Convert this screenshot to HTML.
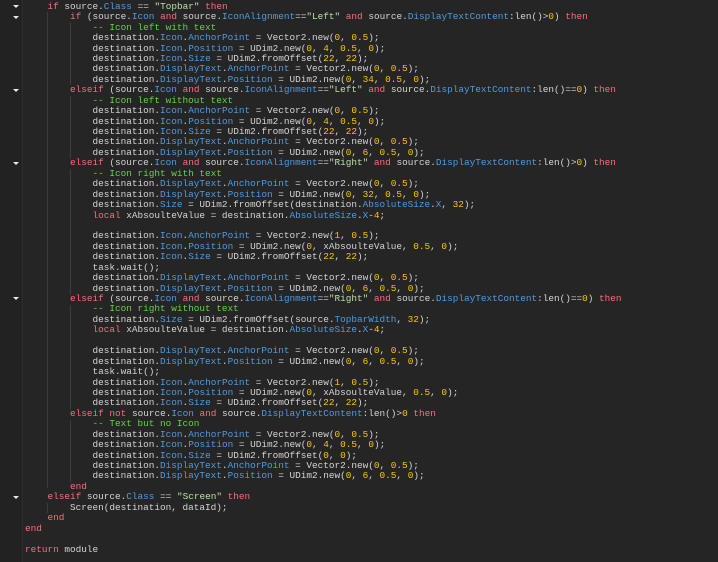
<!DOCTYPE html>
<html><head><meta charset="utf-8"><style>
html,body{margin:0;padding:0;}
body{width:718px;height:562px;background:#252525;overflow:hidden;position:relative;font-family:"Liberation Mono",monospace;}
#gut{position:absolute;left:0;top:0;width:22px;height:562px;background:#222222;border-right:1px solid #2c2c2c;}
.code{position:absolute;left:25px;top:1.8px;font-size:9.4px;line-height:10.44px;white-space:pre;color:#d4d4d4;}
.k{color:#f86d7c}.p{color:#4f9be0}.s{color:#b8e0a6}.n{color:#ffc600}.c{color:#63d34a}
.tri{position:absolute;left:13px;width:0;height:0;border-left:3px solid transparent;border-right:3px solid transparent;border-top:3px solid #e8e8e8;}
.g{position:absolute;width:1px;background:#3c3c3c;}
</style></head><body>
<div id="gut"></div>
<div class="tri" style="top:5px"></div>
<div class="tri" style="top:15.5px"></div>
<div class="tri" style="top:88.6px"></div>
<div class="tri" style="top:161.7px"></div>
<div class="tri" style="top:297.4px"></div>
<div class="tri" style="top:496px"></div>
<div class="g" style="left:47px;top:12px;height:476px"></div>
<div class="g" style="left:47px;top:503px;height:10px"></div>
<div class="g" style="left:70px;top:22px;height:63px"></div>
<div class="g" style="left:70px;top:96px;height:63px"></div>
<div class="g" style="left:70px;top:169px;height:126px"></div>
<div class="g" style="left:70px;top:305px;height:105px"></div>
<div class="g" style="left:70px;top:420px;height:63px"></div>
<div class="code">    <span class="k">if</span> source.<span class="p">Class</span> == <span class="s">"Topbar"</span> <span class="k">then</span>
        <span class="k">if</span> (source.<span class="p">Icon</span> <span class="k">and</span> source.<span class="p">IconAlignment</span>==<span class="s">"Left"</span> <span class="k">and</span> source.<span class="p">DisplayTextContent</span>:len()&gt;<span class="n">0</span>) <span class="k">then</span>
            <span class="c">-- Icon left with text</span>
            destination.<span class="p">Icon</span>.<span class="p">AnchorPoint</span> = Vector2.new(<span class="n">0</span>, <span class="n">0.5</span>);
            destination.<span class="p">Icon</span>.<span class="p">Position</span> = UDim2.new(<span class="n">0</span>, <span class="n">4</span>, <span class="n">0.5</span>, <span class="n">0</span>);
            destination.<span class="p">Icon</span>.<span class="p">Size</span> = UDim2.fromOffset(<span class="n">22</span>, <span class="n">22</span>);
            destination.<span class="p">DisplayText</span>.<span class="p">AnchorPoint</span> = Vector2.new(<span class="n">0</span>, <span class="n">0.5</span>);
            destination.<span class="p">DisplayText</span>.<span class="p">Position</span> = UDim2.new(<span class="n">0</span>, <span class="n">34</span>, <span class="n">0.5</span>, <span class="n">0</span>);
        <span class="k">elseif</span> (source.<span class="p">Icon</span> <span class="k">and</span> source.<span class="p">IconAlignment</span>==<span class="s">"Left"</span> <span class="k">and</span> source.<span class="p">DisplayTextContent</span>:len()==<span class="n">0</span>) <span class="k">then</span>
            <span class="c">-- Icon left without text</span>
            destination.<span class="p">Icon</span>.<span class="p">AnchorPoint</span> = Vector2.new(<span class="n">0</span>, <span class="n">0.5</span>);
            destination.<span class="p">Icon</span>.<span class="p">Position</span> = UDim2.new(<span class="n">0</span>, <span class="n">4</span>, <span class="n">0.5</span>, <span class="n">0</span>);
            destination.<span class="p">Icon</span>.<span class="p">Size</span> = UDim2.fromOffset(<span class="n">22</span>, <span class="n">22</span>);
            destination.<span class="p">DisplayText</span>.<span class="p">AnchorPoint</span> = Vector2.new(<span class="n">0</span>, <span class="n">0.5</span>);
            destination.<span class="p">DisplayText</span>.<span class="p">Position</span> = UDim2.new(<span class="n">0</span>, <span class="n">6</span>, <span class="n">0.5</span>, <span class="n">0</span>);
        <span class="k">elseif</span> (source.<span class="p">Icon</span> <span class="k">and</span> source.<span class="p">IconAlignment</span>==<span class="s">"Right"</span> <span class="k">and</span> source.<span class="p">DisplayTextContent</span>:len()&gt;<span class="n">0</span>) <span class="k">then</span>
            <span class="c">-- Icon right with text</span>
            destination.<span class="p">DisplayText</span>.<span class="p">AnchorPoint</span> = Vector2.new(<span class="n">0</span>, <span class="n">0.5</span>);
            destination.<span class="p">DisplayText</span>.<span class="p">Position</span> = UDim2.new(<span class="n">0</span>, <span class="n">32</span>, <span class="n">0.5</span>, <span class="n">0</span>);
            destination.<span class="p">Size</span> = UDim2.fromOffset(destination.<span class="p">AbsoluteSize</span>.<span class="p">X</span>, <span class="n">32</span>);
            <span class="k">local</span> xAbsoulteValue = destination.<span class="p">AbsoluteSize</span>.<span class="p">X</span>-<span class="n">4</span>;

            destination.<span class="p">Icon</span>.<span class="p">AnchorPoint</span> = Vector2.new(<span class="n">1</span>, <span class="n">0.5</span>);
            destination.<span class="p">Icon</span>.<span class="p">Position</span> = UDim2.new(<span class="n">0</span>, xAbsoulteValue, <span class="n">0.5</span>, <span class="n">0</span>);
            destination.<span class="p">Icon</span>.<span class="p">Size</span> = UDim2.fromOffset(<span class="n">22</span>, <span class="n">22</span>);
            task.wait();
            destination.<span class="p">DisplayText</span>.<span class="p">AnchorPoint</span> = Vector2.new(<span class="n">0</span>, <span class="n">0.5</span>);
            destination.<span class="p">DisplayText</span>.<span class="p">Position</span> = UDim2.new(<span class="n">0</span>, <span class="n">6</span>, <span class="n">0.5</span>, <span class="n">0</span>);
        <span class="k">elseif</span> (source.<span class="p">Icon</span> <span class="k">and</span> source.<span class="p">IconAlignment</span>==<span class="s">"Right"</span> <span class="k">and</span> source.<span class="p">DisplayTextContent</span>:len()==<span class="n">0</span>) <span class="k">then</span>
            <span class="c">-- Icon right without text</span>
            destination.<span class="p">Size</span> = UDim2.fromOffset(source.<span class="p">TopbarWidth</span>, <span class="n">32</span>);
            <span class="k">local</span> xAbsoulteValue = destination.<span class="p">AbsoluteSize</span>.<span class="p">X</span>-<span class="n">4</span>;

            destination.<span class="p">DisplayText</span>.<span class="p">AnchorPoint</span> = Vector2.new(<span class="n">0</span>, <span class="n">0.5</span>);
            destination.<span class="p">DisplayText</span>.<span class="p">Position</span> = UDim2.new(<span class="n">0</span>, <span class="n">6</span>, <span class="n">0.5</span>, <span class="n">0</span>);
            task.wait();
            destination.<span class="p">Icon</span>.<span class="p">AnchorPoint</span> = Vector2.new(<span class="n">1</span>, <span class="n">0.5</span>);
            destination.<span class="p">Icon</span>.<span class="p">Position</span> = UDim2.new(<span class="n">0</span>, xAbsoulteValue, <span class="n">0.5</span>, <span class="n">0</span>);
            destination.<span class="p">Icon</span>.<span class="p">Size</span> = UDim2.fromOffset(<span class="n">22</span>, <span class="n">22</span>);
        <span class="k">elseif</span> <span class="k">not</span> source.<span class="p">Icon</span> <span class="k">and</span> source.<span class="p">DisplayTextContent</span>:len()&gt;<span class="n">0</span> <span class="k">then</span>
            <span class="c">-- Text but no Icon</span>
            destination.<span class="p">Icon</span>.<span class="p">AnchorPoint</span> = Vector2.new(<span class="n">0</span>, <span class="n">0.5</span>);
            destination.<span class="p">Icon</span>.<span class="p">Position</span> = UDim2.new(<span class="n">0</span>, <span class="n">4</span>, <span class="n">0.5</span>, <span class="n">0</span>);
            destination.<span class="p">Icon</span>.<span class="p">Size</span> = UDim2.fromOffset(<span class="n">0</span>, <span class="n">0</span>);
            destination.<span class="p">DisplayText</span>.<span class="p">AnchorPoint</span> = Vector2.new(<span class="n">0</span>, <span class="n">0.5</span>);
            destination.<span class="p">DisplayText</span>.<span class="p">Position</span> = UDim2.new(<span class="n">0</span>, <span class="n">6</span>, <span class="n">0.5</span>, <span class="n">0</span>);
        <span class="k">end</span>
    <span class="k">elseif</span> source.<span class="p">Class</span> == <span class="s">"Screen"</span> <span class="k">then</span>
        Screen(destination, dataId);
    <span class="k">end</span>
<span class="k">end</span>

<span class="k">return</span> module</div>
</body></html>
